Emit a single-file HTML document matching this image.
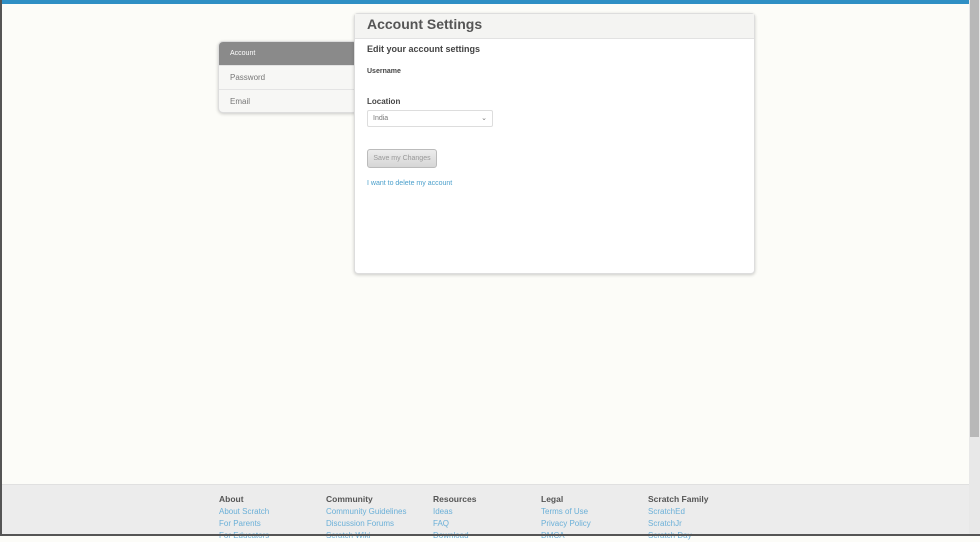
<!DOCTYPE html>
<html><head><style>
*{margin:0;padding:0;box-sizing:border-box}
body{width:980px;height:536px;overflow:hidden;background:#fcfcf8;font-family:"Liberation Sans",sans-serif;position:relative}
.top{position:absolute;left:0;top:0;width:969px;height:4px;background:#2f8fc4}
.lb{position:absolute;left:0;top:0;width:2px;height:536px;background:#555}
.bb{position:absolute;left:0;bottom:0;width:980px;height:2px;background:#555}
.sb{position:absolute;left:969px;top:0;width:11px;height:536px;background:#e8e8e8}
.th{position:absolute;left:970px;top:0;width:9px;height:437px;background:#b8b8b8}
.nav{position:absolute;left:218px;top:41px;width:140px;height:72px;background:#f7f7f5;border:1px solid #ddd;border-radius:5px;box-shadow:0 1px 3px rgba(0,0,0,.2);overflow:hidden;font-size:8px;color:#777}
.nav div{height:24px;line-height:24px;padding-left:11px;border-bottom:1px solid #e4e4e4}
.nav .a{background:#8a8a8a;color:#fff;font-size:7px}
.card{position:absolute;left:354px;top:13px;width:401px;height:261px;background:#fff;border:1px solid #ddd;border-radius:4px;box-shadow:0 1px 3px rgba(0,0,0,.2)}
.hd{height:25px;background:#f4f4f2;border-bottom:1px solid #e2e2e2;padding-left:12px;font-size:14px;font-weight:bold;color:#555;line-height:21px}
.card .t{position:absolute;left:12px;font-weight:bold;color:#444}
.sel{position:absolute;left:12px;top:96px;width:126px;height:17px;border:1px solid #ddd;border-radius:2px;font-size:7px;color:#777;line-height:15px;padding-left:5px}
.sel span{position:absolute;right:5px;top:0;font-size:7px}
.btn{position:absolute;left:12px;top:135px;width:70px;height:19px;background:linear-gradient(#ececec,#d6d6d6);border:1px solid #bbb;border-radius:3px;font-size:7px;color:#999;text-align:center;line-height:17px}
.del{position:absolute;left:12px;top:166px;font-size:7px;color:#4a9fcb}
.foot{position:absolute;left:2px;top:484px;width:967px;height:52px;background:#ececec;border-top:1px solid #e0e0e0}
.col{position:absolute;top:8px;font-size:8px;line-height:12px}
.col b{display:block;color:#555;font-size:8.5px;margin-bottom:1px}
.col a{display:block;color:#6bb0d8;text-decoration:none}
</style></head><body>
<div class="top"></div>
<div class="nav"><div class="a">Account</div><div>Password</div><div style="border:0">Email</div></div>
<div class="card">
<div class="hd">Account Settings</div>
<div class="t" style="top:30px;font-size:9px">Edit your account settings</div>
<div class="t" style="top:54px;font-size:7px">Username</div>
<div class="t" style="top:83px;font-size:8px">Location</div>
<div class="sel">India<span>&#8964;</span></div>
<div class="btn">Save my Changes</div>
<div class="del">I want to delete my account</div>
</div>
<div class="foot">
<div class="col" style="left:217px"><b>About</b><a>About Scratch</a><a>For Parents</a><a>For Educators</a></div>
<div class="col" style="left:324px"><b>Community</b><a>Community Guidelines</a><a>Discussion Forums</a><a>Scratch Wiki</a></div>
<div class="col" style="left:431px"><b>Resources</b><a>Ideas</a><a>FAQ</a><a>Download</a></div>
<div class="col" style="left:539px"><b>Legal</b><a>Terms of Use</a><a>Privacy Policy</a><a>DMCA</a></div>
<div class="col" style="left:646px"><b>Scratch Family</b><a>ScratchEd</a><a>ScratchJr</a><a>Scratch Day</a></div>
</div>
<div class="sb"></div><div class="th"></div>
<div class="lb"></div><div class="bb"></div>
</body></html>
